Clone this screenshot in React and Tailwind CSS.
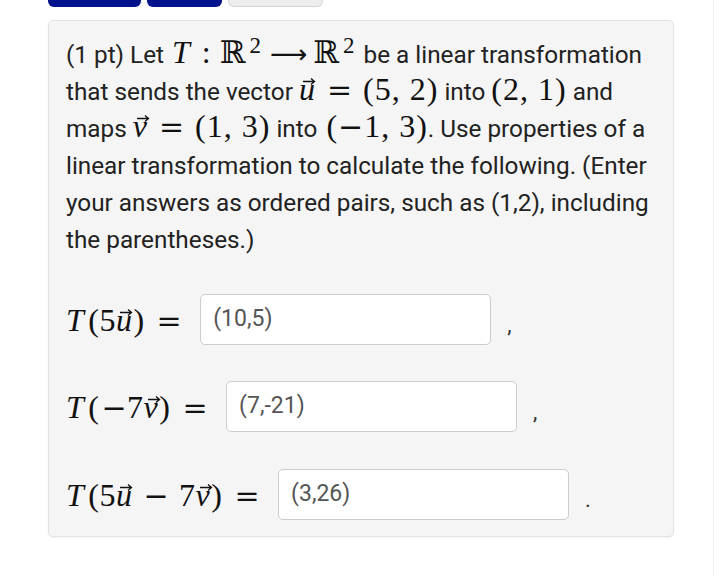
import React from "react";

const serif = "font-['Liberation_Serif','DejaVu_Serif',serif]";
const dv = "font-['DejaVu_Serif',serif]";

// vector accent drawn above a letter
function Vec({ ch }) {
  return (
    <span className="relative inline-block italic leading-none mr-[1px]">
      {ch}
      <svg
        className="absolute left-[3px] top-[4px]"
        width="14"
        height="8"
        viewBox="0 0 14 8"
        fill="none"
        stroke="#111"
        strokeWidth="1.3"
      >
        <path d="M1 4.5h11.5M9 1.5l3.5 3-3.5 3" />
      </svg>
    </span>
  );
}

function M({ children, className = "" }) {
  return (
    <span className={`${serif} text-[32px] leading-none tracking-[1px] text-[#111] ${className}`}>
      {children}
    </span>
  );
}

function Eq({ className = "mx-[10px]" }) {
  return <span className={`${dv} text-[30px] leading-[0] ${className}`}>=</span>;
}

function Minus({ className = "" }) {
  return <span className={`${dv} text-[30px] leading-[0] ${className}`}>−</span>;
}

function RR() {
  return (
    <>
      <span className={`${dv} text-[31px] leading-[0]`}>ℝ</span>
      <span className="relative top-[-10px] text-[23px] leading-[0] ml-[3px] mr-[2px]">2</span>
    </>
  );
}

function T({ className = "mr-[3px]" }) {
  return <span className={`italic ${className}`}>T</span>;
}

function AnswerRow({ label, value, punct, className }) {
  return (
    <div className={`flex items-center ${className}`}>
      <span className={`${serif} text-[32px] leading-none tracking-[0.5px] text-[#111] whitespace-nowrap`}>
        {label}
      </span>
      <div className="ml-[18px] w-[291px] h-[51px] bg-white border border-[#cccccc] rounded-[5px] flex items-center px-[12px] text-[23px] text-[#555]">
        {value}
      </div>
      <span className="ml-[16px] text-[22px] leading-none text-[#333] mt-[10px]">{punct}</span>
    </div>
  );
}

export default function App() {
  return (
    <div className="w-[720px] h-[576px] bg-white flex font-['Roboto',sans-serif] overflow-hidden">
      <div className="flex-1 flex flex-col">
        {/* tab buttons, cut off at top */}
        <div className="flex gap-[6px] pl-[48px]">
          <div className="w-[93px] h-[7px] bg-[#00138c] rounded-b-[6px]" />
          <div className="w-[75px] h-[7px] bg-[#00138c] rounded-b-[6px]" />
          <div className="w-[95px] h-[7px] bg-[#eeeeee] border border-t-0 border-[#d6d6d6] rounded-b-[6px]" />
        </div>

        {/* problem card */}
        <div className="ml-[48px] mt-[13px] w-[626px] h-[517px] bg-[#f5f5f5] border border-[#e3e3e3] rounded-[5px] shadow-[0_1px_2px_rgba(0,0,0,0.05)] pl-[17px] pt-[15px]">
          <div className="text-[24.3px] leading-[37px] text-[#222] whitespace-nowrap">
            <div>
              (1 pt) Let{" "}
              <M className="ml-[2px]">
                <T />
                <span className="mx-[8px]">:</span>
                <RR />
                <span className="mx-[6px] font-['DejaVu_Sans',sans-serif] text-[26px] leading-[0] tracking-normal">
                  ⟶
                </span>
                <RR />
              </M>{" "}
              be a linear transformation
            </div>
            <div>
              that sends the vector{" "}
              <M>
                <Vec ch="u" />
                <Eq />
                (5, 2)
              </M>{" "}
              into <M>(2, 1)</M> and
            </div>
            <div>
              maps{" "}
              <M>
                <Vec ch="v" />
                <Eq />
                (1, 3)
              </M>{" "}
              into{" "}
              <M className="ml-[3px]">
                (<Minus />
                1, 3)
              </M>
              . Use properties of a
            </div>
            <div>linear transformation to calculate the following. (Enter</div>
            <div>your answers as ordered pairs, such as (1,2), including</div>
            <div>the parentheses.)</div>
          </div>

          <AnswerRow
            className="mt-[36px]"
            label={
              <>
                <T className="mr-[4px]" />(5<Vec ch="u" />)<Eq className="ml-[12px]" />
              </>
            }
            value="(10,5)"
            punct=","
          />
          <AnswerRow
            className="mt-[36px]"
            label={
              <>
                <T className="mr-[4px]" />(<Minus className="ml-[2px]" />7<Vec ch="v" />)
                <Eq className="ml-[12px]" />
              </>
            }
            value="(7,-21)"
            punct=","
          />
          <AnswerRow
            className="mt-[37px]"
            label={
              <>
                <T className="mr-[4px]" />(5<Vec ch="u" />
                <Minus className="mx-[10px]" />7<Vec ch="v" />)<Eq className="ml-[12px]" />
              </>
            }
            value="(3,26)"
            punct="."
          />
        </div>
      </div>
      <div className="w-[7px] border-l border-[#f0f0f0]" />
    </div>
  );
}
